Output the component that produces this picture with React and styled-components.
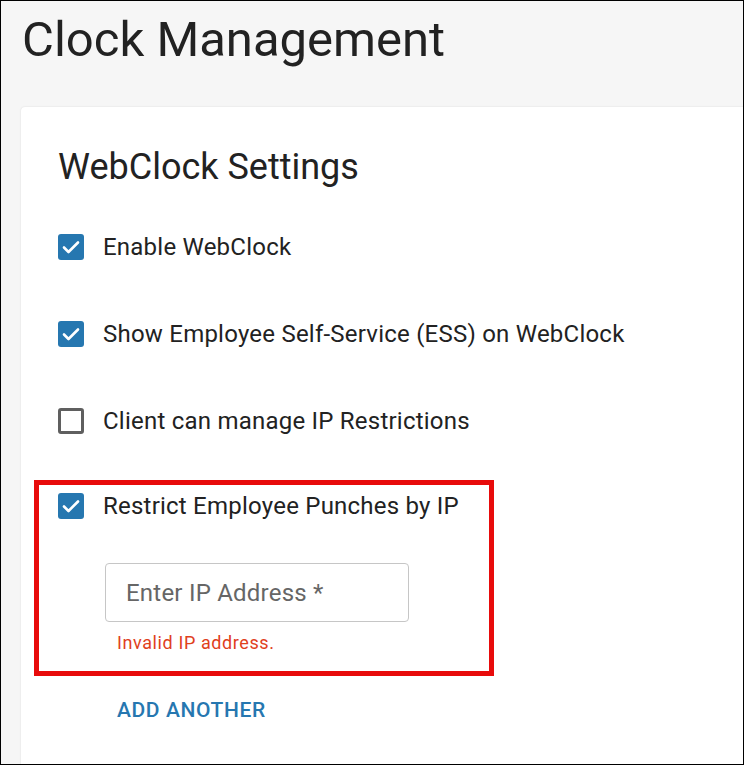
import React from 'react'
import styled, { createGlobalStyle } from 'styled-components'

const GlobalStyle = createGlobalStyle`
  html, body {
    margin: 0;
    padding: 0;
    background: #f6f6f6;
    font-family: Roboto, "Liberation Sans", sans-serif;
    color: #222;
  }
`

const Frame = styled.div`
  box-sizing: border-box;
  width: 744px;
  height: 765px;
  border: 1px solid #000;
  background: #f6f6f6;
  overflow: hidden;
  padding: 11px 0 0 20px;
`

const Title = styled.h1`
  margin: 0 0 39px 1px;
  font-size: 49px;
  line-height: 56px;
  font-weight: 400;
  color: #222;
`

const Card = styled.div`
  width: 800px;
  min-height: 700px;
  background: #fff;
  border-radius: 4px;
  box-shadow: 0 0 2px rgba(0, 0, 0, 0.12);
  padding: 38px 0 0 37px;
`

const Heading = styled.h2`
  margin: 0 0 45px;
  font-size: 36px;
  line-height: 44px;
  font-weight: 400;
  color: #222;
`

const Row = styled.label`
  display: flex;
  align-items: center;
  gap: 19px;
  height: 26px;
  margin-bottom: ${p => p.$last ? 0 : 61}px;
`

const Box = styled.span`
  box-sizing: border-box;
  width: 26px;
  height: 26px;
  border-radius: 3px;
  display: flex;
  align-items: center;
  justify-content: center;
  background: ${p => p.$checked ? '#2677b0' : '#fff'};
  border: ${p => p.$checked ? 'none' : '3px solid #5f5f5f'};
`

const Label = styled.span`
  font-size: 24px;
  line-height: 26px;
  letter-spacing: 0.00938em;
  color: #222;
`

const Highlight = styled.div`
  box-sizing: border-box;
  width: 460px;
  margin: 46px 0 0 -24px;
  border: 5px solid #e80b0b;
  padding: 8px 0 17px 19px;
`

const Field = styled.div`
  margin: 44px 0 0 47px;
`

const Input = styled.div`
  box-sizing: border-box;
  width: 304px;
  height: 59px;
  border: 1px solid #c6c6c6;
  border-radius: 4px;
  display: flex;
  align-items: center;
  padding-left: 20px;
  font-size: 24px;
  letter-spacing: 0.00938em;
  color: #666;
`

const Error = styled.div`
  margin: 10px 0 0 12px;
  font-size: 18px;
  line-height: 22px;
  letter-spacing: 0.03333em;
  color: #e0401c;
`

const AddButton = styled.button`
  margin: 22px 0 0 59px;
  padding: 0;
  border: none;
  background: none;
  font-family: Roboto, "Liberation Sans", sans-serif;
  font-size: 21px;
  line-height: 24px;
  font-weight: 500;
  letter-spacing: 0.02857em;
  color: #2677b0;
  text-transform: uppercase;
`

function Checkbox({ checked }) {
  return (
    <Box $checked={checked}>
      {checked && (
        <svg width="26" height="26" viewBox="0 0 26 26">
          <path d="M6 13.5 L10.5 18 L20 8.5" fill="none" stroke="#fff" strokeWidth="2.6" strokeLinecap="round" strokeLinejoin="round" />
        </svg>
      )}
    </Box>
  )
}

export default function App() {
  return (
    <Frame>
      <GlobalStyle />
      <Title>Clock Management</Title>
      <Card>
        <Heading>WebClock Settings</Heading>
        <Row>
          <Checkbox checked />
          <Label>Enable WebClock</Label>
        </Row>
        <Row>
          <Checkbox checked />
          <Label>Show Employee Self-Service (ESS) on WebClock</Label>
        </Row>
        <Row $last>
          <Checkbox />
          <Label>Client can manage IP Restrictions</Label>
        </Row>
        <Highlight>
          <Row $last>
            <Checkbox checked />
            <Label>Restrict Employee Punches by IP</Label>
          </Row>
          <Field>
            <Input>Enter IP Address *</Input>
            <Error>Invalid IP address.</Error>
          </Field>
        </Highlight>
        <AddButton>Add Another</AddButton>
      </Card>
    </Frame>
  )
}
